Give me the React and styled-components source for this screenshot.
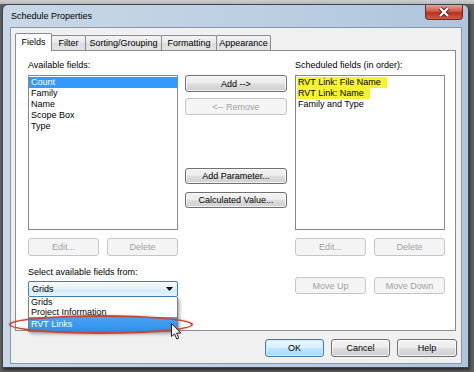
import styled, { createGlobalStyle } from "styled-components";

const GlobalStyle = createGlobalStyle`
  html, body {
    margin: 0;
    padding: 0;
  }

  body {
    width: 474px;
    height: 372px;
    overflow: hidden;
    background: #6c6c6c;
    font-family: "Liberation Sans", Arial, sans-serif;
    font-size: 9px;
    color: #000;
  }
`;

const Screen = styled.div`
  width: 474px;
  height: 372px;
  box-sizing: border-box;
  padding: 4px 0 0 2px;
  background: linear-gradient(#cdcdcd 0, #b9b9b9 4px, #5e5e5e 4px);
`;

const Window = styled.div`
  width: 467px;
  height: 364px;
  box-sizing: border-box;
  display: flex;
  flex-direction: column;

  padding: 0 6px 3px 7px;

  border: 1px solid #3b4652;
  border-radius: 6px 6px 0 0;
  background: linear-gradient(to right, #c9d7e6, #bccfe3 55%, #afc5dc);
  box-shadow: 1px 2px 3px rgba(0, 0, 0, 0.55);
`;

const TitleBar = styled.div`
  height: 22px;
  flex-shrink: 0;
  display: flex;
  align-items: flex-start;
  justify-content: space-between;
`;

const Title = styled.div`
  margin-top: 5px;
  padding-left: 1px;
  font-size: 9px;
  line-height: 12px;
`;

const CloseButton = styled.div`
  width: 38px;
  height: 15px;
  margin-right: -1px;
  display: flex;
  align-items: center;
  justify-content: center;

  border: 1px solid #6b2a24;
  border-top: none;
  border-radius: 0 0 4px 4px;
  box-sizing: border-box;
  background: linear-gradient(#e8a093, #d0594a 45%, #b8301f 55%, #cf5b45);
`;

const Client = styled.div`
  flex: 1;
  display: flex;
  flex-direction: column;
  box-sizing: border-box;

  padding: 5px 5px 0 4px;

  border: 1px solid #8798ab;
  background: #f0f0f0;
`;

const TabStrip = styled.div`
  height: 18px;
  margin-bottom: -1px;
  display: flex;
  align-items: flex-start;
`;

const Tab = styled.div`
  width: ${({ $w }) => $w}px;
  height: ${({ $active }) => ($active ? 18 : 15)}px;
  margin-top: ${({ $active }) => ($active ? 0 : 2)}px;
  margin-left: -1px;
  box-sizing: border-box;
  display: flex;
  align-items: center;
  justify-content: center;
  position: relative;
  z-index: ${({ $active }) => ($active ? 1 : 0)};

  border: 1px solid #898c95;
  border-bottom: none;
  border-radius: 2px 2px 0 0;
  background: ${({ $active }) =>
    $active
      ? "#fff"
      : "linear-gradient(#f4f4f4, #e9e9e9 48%, #dcdcdc 52%, #e4e4e4)"};
  line-height: 12px;
  padding-bottom: ${({ $active }) => ($active ? 1 : 0)}px;

  &:first-child {
    margin-left: 0;
  }
`;

const Panel = styled.div`
  height: 281px;
  box-sizing: border-box;
  display: grid;
  grid-template-columns: 150px 103px 150px;
  column-gap: 7px;
  align-items: start;

  padding: 8px 0 0 12px;

  border: 1px solid #898c95;
  background: #fff;
`;

const Column = styled.div`
  display: flex;
  flex-direction: column;
  position: relative;
`;

const MiddleColumn = styled.div`
  display: flex;
  flex-direction: column;
  padding-top: 16px;
`;

const Label = styled.div`
  line-height: 12px;
  height: 12px;
  white-space: nowrap;
  margin-top: ${({ $mt }) => $mt || 0}px;
`;

const ListBox = styled.div`
  margin-top: 4px;
  height: 155px;
  box-sizing: border-box;
  padding-top: 1px;
  border: 1px solid #828790;
  background: #fff;
`;

const ListItem = styled.div`
  height: 11px;
  line-height: 11px;
  padding-left: 2px;
  white-space: nowrap;
  color: ${({ $selected }) => ($selected ? "#fff" : "#000")};
  background: ${({ $selected }) => ($selected ? "#3399ff" : "transparent")};
`;

const Marked = styled.span`
  display: inline-block;
  padding: 0 6px 0 1px;
  margin-left: -1px;
  background: #f5f232;
`;

const Button = styled.div`
  width: ${({ $w }) => ($w ? `${$w}px` : "auto")};
  height: ${({ $h }) => $h || 17}px;
  margin-top: ${({ $mt }) => $mt || 0}px;
  box-sizing: border-box;
  display: flex;
  align-items: center;
  justify-content: center;
  white-space: nowrap;

  border: 1px solid ${({ $disabled }) => ($disabled ? "#c4c6c9" : "#707070")};
  border-radius: 3px;
  color: ${({ $disabled }) => ($disabled ? "#a2a2a2" : "#000")};
  background: ${({ $disabled }) =>
    $disabled
      ? "#f4f4f4"
      : "linear-gradient(#f3f3f3, #ebebeb 48%, #dddddd 52%, #cfcfcf)"};
  box-shadow: ${({ $disabled }) =>
    $disabled ? "none" : "inset 0 0 0 1px rgba(255, 255, 255, 0.7)"};
`;

const DefaultButton = styled(Button)`
  border-color: #3c7fb1;
  background: linear-gradient(#eaf6fd, #d9f0fc 48%, #bee6fd 52%, #a7d9f5);
  box-shadow: inset 0 0 0 1px #c8ecfc;
`;

const ButtonRow = styled.div`
  margin-top: ${({ $mt }) => $mt}px;
  display: flex;
  justify-content: space-between;
`;

const ComboWrap = styled.div`
  margin-top: 3px;
  position: relative;
`;

const Combo = styled.div`
  height: 16px;
  box-sizing: border-box;
  display: flex;
  align-items: center;
  justify-content: space-between;
  padding: 0 4px 0 3px;

  border: 1px solid #3c7fb1;
  border-radius: 2px;
  background: linear-gradient(#f6fbfe, #e3f1fb 50%, #d3e9f8 52%, #e7f3fc);
`;

const Popup = styled.div`
  position: absolute;
  top: 16px;
  left: 0;
  width: 150px;
  height: 35px;
  box-sizing: border-box;
  overflow: hidden;

  border: 1px solid #7a7a7a;
  border-top: none;
  background: #fff;
  box-shadow: 2px 2px 3px rgba(0, 0, 0, 0.3);
`;

const PopupItem = styled.div`
  height: ${({ $h }) => $h}px;
  line-height: ${({ $h }) => $h}px;
  padding-left: 2px;
  color: ${({ $selected }) => ($selected ? "#fff" : "#000")};
  background: ${({ $selected }) =>
    $selected ? "linear-gradient(#4aa3f5, #2f8fe8)" : "transparent"};
`;

const Ellipse = styled.div`
  position: absolute;
  left: -19px;
  top: 34px;
  width: 184px;
  height: 19px;
  box-sizing: border-box;
  border: 2px solid #c7462f;
  border-radius: 50%;
  box-shadow: 0 0 2px rgba(199, 70, 47, 0.5);
  pointer-events: none;
`;

const Cursor = styled.svg`
  position: absolute;
  left: 143px;
  top: 42px;
`;

const Footer = styled.div`
  display: flex;
  justify-content: flex-end;
  gap: 7px;
  margin: 8px -1px 0 0;
`;

function CloseGlyph() {
  return (
    <svg width="12" height="10" viewBox="0 0 12 10">
      <path d="M2 1 L10 9 M10 1 L2 9" stroke="#5a1f18" strokeWidth="4" />
      <path d="M2 1 L10 9 M10 1 L2 9" stroke="#fff" strokeWidth="2.2" />
    </svg>
  );
}

function ArrowDown() {
  return (
    <svg width="7" height="4" viewBox="0 0 7 4">
      <path d="M0 0 H7 L3.5 4 Z" fill="#000" />
    </svg>
  );
}

export default function App() {
  return (
    <>
      <GlobalStyle />
      <Screen>
        <Window>
          <TitleBar>
            <Title>Schedule Properties</Title>
            <CloseButton>
              <CloseGlyph />
            </CloseButton>
          </TitleBar>
          <Client>
            <TabStrip>
              <Tab $active $w={37}>Fields</Tab>
              <Tab $w={35}>Filter</Tab>
              <Tab $w={77}>Sorting/Grouping</Tab>
              <Tab $w={56}>Formatting</Tab>
              <Tab $w={55}>Appearance</Tab>
            </TabStrip>
            <Panel>
              <Column>
                <Label>Available fields:</Label>
                <ListBox>
                  <ListItem $selected>Count</ListItem>
                  <ListItem>Family</ListItem>
                  <ListItem>Name</ListItem>
                  <ListItem>Scope Box</ListItem>
                  <ListItem>Type</ListItem>
                </ListBox>
                <ButtonRow $mt={8}>
                  <Button $disabled $w={71} $h={18}>Edit...</Button>
                  <Button $disabled $w={71} $h={18}>Delete</Button>
                </ButtonRow>
                <Label $mt={10}>Select available fields from:</Label>
                <ComboWrap>
                  <Combo>
                    <span>Grids</span>
                    <ArrowDown />
                  </Combo>
                  <Popup>
                    <PopupItem $h={10}>Grids</PopupItem>
                    <PopupItem $h={10}>Project Information</PopupItem>
                    <PopupItem $h={14} $selected>RVT Links</PopupItem>
                  </Popup>
                  <Ellipse />
                  <Cursor width="11" height="17" viewBox="0 0 11 17">
                    <path
                      d="M0.5 0.5 V13.5 L3.5 10.8 L5.8 16 L7.8 15.1 L5.6 10 H9.8 Z"
                      fill="#fff"
                      stroke="#222"
                      strokeWidth="1"
                    />
                  </Cursor>
                </ComboWrap>
              </Column>
              <MiddleColumn>
                <Button $w={102}>Add --&gt;</Button>
                <Button $disabled $w={102} $mt={6}>&lt;-- Remove</Button>
                <Button $w={102} $mt={53} $h={16}>Add Parameter...</Button>
                <Button $w={102} $mt={8} $h={16}>Calculated Value...</Button>
              </MiddleColumn>
              <Column>
                <Label>Scheduled fields (in order):</Label>
                <ListBox>
                  <ListItem>
                    <Marked>RVT Link: File Name</Marked>
                  </ListItem>
                  <ListItem>
                    <Marked>RVT Link: Name</Marked>
                  </ListItem>
                  <ListItem>Family and Type</ListItem>
                </ListBox>
                <ButtonRow $mt={8}>
                  <Button $disabled $w={71} $h={18}>Edit...</Button>
                  <Button $disabled $w={71} $h={18}>Delete</Button>
                </ButtonRow>
                <ButtonRow $mt={21}>
                  <Button $disabled $w={71}>Move Up</Button>
                  <Button $disabled $w={71}>Move Down</Button>
                </ButtonRow>
              </Column>
            </Panel>
            <Footer>
              <DefaultButton $w={59} $h={18}>OK</DefaultButton>
              <Button $w={59} $h={18}>Cancel</Button>
              <Button $w={60} $h={18}>Help</Button>
            </Footer>
          </Client>
        </Window>
      </Screen>
    </>
  );
}
